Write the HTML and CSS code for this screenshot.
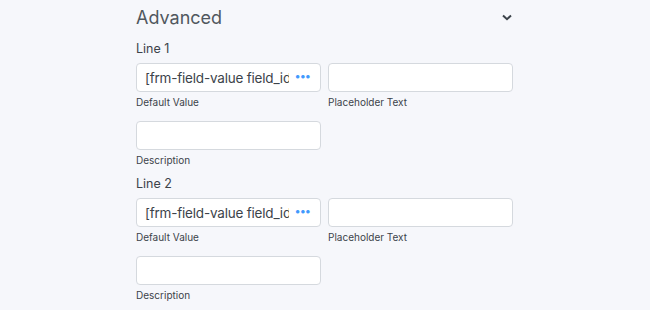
FILE: index.html
```html
<!DOCTYPE html>
<html lang="en">
<head>
    <meta charset="UTF-8">
    <title>Advanced field options</title>
    <link rel="stylesheet" href="styles.css">
</head>
<body>
    <div class="panel">
        <div class="panel-head">
            <h3>Advanced</h3>
            <svg class="chevron" width="10" height="7" viewBox="0 0 10 7">
                <path d="M1 1.5 L5 5.2 L9 1.5" fill="none" stroke="#3c434a" stroke-width="2"/>
            </svg>
        </div>

        <div class="line-group">
            <label class="line-label">Line 1</label>
            <div class="field-grid">
                <div class="field">
                    <div class="input-wrap">
                        <input type="text" class="with-dots" value="[frm-field-value field_id">
                        <span class="dots">&bull;&bull;&bull;</span>
                    </div>
                    <span class="sub-label">Default Value</span>
                </div>
                <div class="field">
                    <input type="text">
                    <span class="sub-label">Placeholder Text</span>
                </div>
                <div class="field">
                    <input type="text">
                    <span class="sub-label">Description</span>
                </div>
            </div>
        </div>

        <div class="line-group">
            <label class="line-label">Line 2</label>
            <div class="field-grid">
                <div class="field">
                    <div class="input-wrap">
                        <input type="text" class="with-dots" value="[frm-field-value field_id">
                        <span class="dots">&bull;&bull;&bull;</span>
                    </div>
                    <span class="sub-label">Default Value</span>
                </div>
                <div class="field">
                    <input type="text">
                    <span class="sub-label">Placeholder Text</span>
                </div>
                <div class="field">
                    <input type="text">
                    <span class="sub-label">Description</span>
                </div>
            </div>
        </div>
    </div>
</body>
</html>
```

FILE: styles.css
```css
body {
    font-family: 'Inter', 'Noto Sans', sans-serif;
    margin: 0;
    padding: 0;
    background-color: #f6f7fb;
    color: #3c434a;
}
.panel {
    width: 377px;
    margin-left: 136px;
}
.panel-head {
    display: flex;
    justify-content: space-between;
    align-items: center;
    height: 34px;
}
.panel-head h3 {
    margin: 0;
    font-size: 18px;
    font-weight: 400;
    color: #50575e;
}
.chevron {
    margin-right: 1px;
}
.line-group {
    padding-top: 7px;
}
.line-group + .line-group {
    padding-top: 9px;
}
.line-label {
    display: block;
    font-size: 12.5px;
    line-height: 16px;
    margin-bottom: 6px;
}
.field-grid {
    display: grid;
    grid-template-columns: 185px 185px;
    column-gap: 7px;
    row-gap: 12px;
}
.field {
    display: flex;
    flex-direction: column;
}
.input-wrap {
    position: relative;
}
input[type="text"] {
    box-sizing: border-box;
    width: 100%;
    height: 29px;
    padding: 0 8px;
    border: 1px solid #d5d9de;
    border-radius: 4px;
    background-color: #fff;
    font-family: 'Inter', sans-serif;
    font-size: 13.5px;
    letter-spacing: -0.2px;
    color: #3c434a;
}
input.with-dots {
    padding-right: 31px;
}
.dots {
    position: absolute;
    right: 11px;
    top: 6px;
    font-size: 11px;
    letter-spacing: -1px;
    color: #4199fd;
}
.sub-label {
    margin-top: 3px;
    font-size: 10px;
    line-height: 14px;
}
```
